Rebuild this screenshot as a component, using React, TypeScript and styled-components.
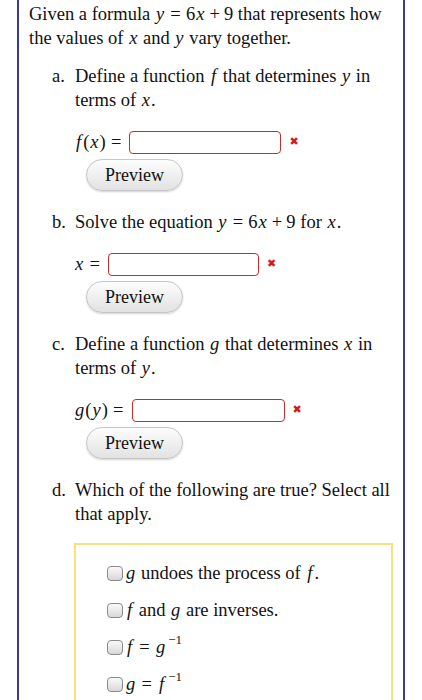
import React from "react";
import styled, { createGlobalStyle } from "styled-components";

const GlobalStyle = createGlobalStyle`
  html, body {
    margin: 0;
    padding: 0;
    background: #fff;
  }
  body {
    font-family: "Liberation Serif", "Times New Roman", serif;
    color: #111;
  }
`;

type Kids = { children: React.ReactNode };

// math variable; f gets a bit more room like MathJax's wide italic f
const V = ({ children }: Kids) => <SVar $wide={children === "f"}>{children}</SVar>;
const Rel = ({ children }: Kids) => <SRel>{children}</SRel>;
const Bin = ({ children }: Kids) => <SBin>{children}</SBin>;

function AnswerBlock({ label, inputWidth }: { label: React.ReactNode; inputWidth: number }) {
  return (
    <SAnswer>
      <SAnswerRow>
        <SLabel>{label}</SLabel>
        <SInput type="text" $w={inputWidth} />
        <SMark>✖</SMark>
      </SAnswerRow>
      <SPreview>Preview</SPreview>
    </SAnswer>
  );
}

function Option({ children }: Kids) {
  return (
    <SOption>
      <SCheck />
      <span>{children}</span>
    </SOption>
  );
}

export default function App() {
  return (
    <>
      <GlobalStyle />
      <SFrame>
        <SIntro>
          Given a formula <V>y</V><Rel>=</Rel>6<V>x</V><Bin>+</Bin>9 that represents how the
          values of <V>x</V> and <V>y</V> vary together.
        </SIntro>

        <SItem>
          <SMarker>a.</SMarker>
          <SBody>
            <div>
              Define a function <V>f</V> that determines <V>y</V> in terms of <V>x</V>.
            </div>
            <AnswerBlock
              label={
                <>
                  <V>f</V>(<V>x</V>)<Rel>=</Rel>
                </>
              }
              inputWidth={152}
            />
          </SBody>
        </SItem>

        <SItem>
          <SMarker>b.</SMarker>
          <SBody>
            <div>
              Solve the equation <V>y</V><Rel>=</Rel>6<V>x</V><Bin>+</Bin>9 for <V>x</V>.
            </div>
            <AnswerBlock
              label={
                <>
                  <V>x</V>
                  <Rel>=</Rel>
                </>
              }
              inputWidth={151}
            />
          </SBody>
        </SItem>

        <SItem>
          <SMarker>c.</SMarker>
          <SBody>
            <div>
              Define a function <V>g</V> that determines <V>x</V> in terms of <V>y</V>.
            </div>
            <AnswerBlock
              label={
                <>
                  <V>g</V>(<V>y</V>)<Rel>=</Rel>
                </>
              }
              inputWidth={153}
            />
          </SBody>
        </SItem>

        <SItem>
          <SMarker>d.</SMarker>
          <SBody>
            <div>Which of the following are true? Select all that apply.</div>
          </SBody>
        </SItem>

        <SChoices>
          <Option>
            <V>g</V> undoes the process of <V>f</V>.
          </Option>
          <Option>
            <V>f</V> and <V>g</V> are inverses.
          </Option>
          <Option>
            <V>f</V>
            <Rel>=</Rel>
            <V>g</V>
            <SSup>−1</SSup>
          </Option>
          <Option>
            <V>g</V>
            <Rel>=</Rel>
            <V>f</V>
            <SSup>−1</SSup>
          </Option>
        </SChoices>
      </SFrame>
    </>
  );
}

const SFrame = styled.div`
  box-sizing: border-box;
  margin-left: 17px;
  width: 388px;
  min-height: 700px;
  border-left: 2px solid #3b3b94;
  border-right: 2px solid #3b3b94;
  padding: 2px 10px 0 10px;
  font-size: 18.5px;
  line-height: 24px;
`;

const SIntro = styled.p`
  margin: 0;
`;

const SVar = styled.span<{ $wide: boolean }>`
  font-style: italic;
  padding: 0 ${(p) => (p.$wide ? "2px 0 2px" : "1px")};
`;

const SRel = styled.span`
  margin: 0 0.28em;
`;

const SBin = styled.span`
  margin: 0 0.22em;
`;

const SSup = styled.sup`
  font-size: 13px;
  line-height: 0;
  vertical-align: 0;
  position: relative;
  top: -9px;
  margin-left: 2px;
`;

const SItem = styled.div`
  display: flex;
  margin-top: 14px;
  padding-left: 23px;
`;

const SMarker = styled.div`
  width: 23px;
  flex: none;
`;

const SBody = styled.div`
  flex: 1;
`;

const SAnswer = styled.div`
  display: flex;
  flex-direction: column;
  align-items: flex-start;
  margin: 17px 0 5px;
`;

const SAnswerRow = styled.div`
  display: flex;
  align-items: center;
  height: 26px;
`;

const SLabel = styled.span`
  white-space: nowrap;
  margin-left: -1px;
  margin-right: 3px;
`;

const SInput = styled.input<{ $w: number }>`
  box-sizing: border-box;
  width: ${(p) => p.$w}px;
  height: 23px;
  border: 1px solid #cc2a2a;
  border-radius: 4px;
  background: #fff;
  margin: 0;
  padding: 0;
  outline: none;
`;

const SMark = styled.span`
  color: #d41a1a;
  font-size: 11px;
  font-family: "DejaVu Sans", sans-serif;
  margin-left: 8px;
`;

const SPreview = styled.button`
  margin: 4px 0 0 11px;
  width: 97px;
  height: 32px;
  border: 1px solid #c6c6c6;
  border-radius: 16px;
  background: linear-gradient(#fdfdfd, #e2e2e2);
  box-shadow: 0 1px 2px rgba(0, 0, 0, 0.18);
  font-family: "Liberation Serif", "Times New Roman", serif;
  font-size: 18px;
  color: #111;
  padding: 0;
`;

const SChoices = styled.div`
  box-sizing: border-box;
  margin: 17px 0 0 45px;
  width: 319px;
  border: 2px solid #f6e27c;
  padding: 16px 0 8px 31px;
  display: flex;
  flex-direction: column;
  gap: 13px;
`;

const SOption = styled.div`
  display: flex;
  align-items: center;
  gap: 2px;
`;

const SCheck = styled.span`
  display: inline-block;
  box-sizing: border-box;
  width: 16px;
  height: 15px;
  border: 1px solid #8a8a8a;
  border-radius: 4px;
  background: linear-gradient(#fafafa, #d8d8d8);
  flex: none;
`;
